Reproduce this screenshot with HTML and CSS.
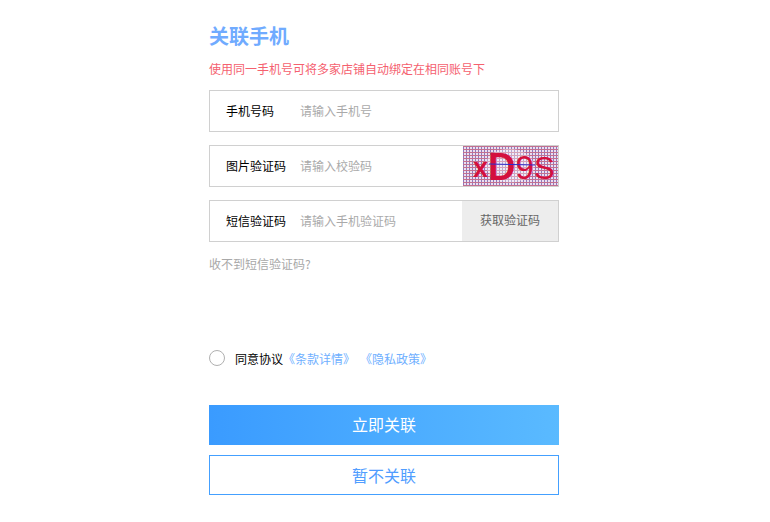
FILE: index.html
```html
<!DOCTYPE html>
<html>
    <head>
        <title>关联手机</title>
        <link rel="stylesheet" href="styles.css">
    </head>
    <body>
        <div class="bind">
            <h1 class="title">关联手机</h1>
            <p class="tip">使用同一手机号可将多家店铺自动绑定在相同账号下</p>
            <div class="field">
                <span class="label">手机号码</span>
                <span class="input">请输入手机号</span>
            </div>
            <div class="field">
                <span class="label">图片验证码</span>
                <span class="input">请输入校验码</span>
                <svg class="captcha" width="95" height="40" viewBox="0 0 95 40">
                    <defs>
                        <pattern id="dots" width="3" height="3" patternUnits="userSpaceOnUse">
                            <rect width="3" height="3" fill="#ecdfee"/>
                            <rect width="1" height="3" fill="#8f78bd"/>
                            <rect width="3" height="1" fill="#c4708f"/>
                        </pattern>
                    </defs>
                    <rect width="95" height="40" fill="url(#dots)"/>
                    <path d="M22 20 C24 -2 66 -4 72 20 C68 42 28 42 22 20 Z" fill="#fff" opacity=".35"/>
                    <text class="cap"><tspan class="cap-x" x="10" y="31">x</tspan><tspan class="cap-d" x="25" y="34">D</tspan><tspan class="cap-9" x="52.5" y="33">9</tspan><tspan class="cap-s" x="71" y="33">S</tspan></text>
                    <path d="M26 18 L72 19" stroke="#2a2fd0" stroke-width="1"/>
                </svg>
            </div>
            <div class="field">
                <span class="label">短信验证码</span>
                <span class="input">请输入手机验证码</span>
                <span class="send">获取验证码</span>
            </div>
            <div class="help">收不到短信验证码?</div>
            <div class="agree">
                <span class="radio"></span>
                <span class="agree-text">同意协议</span>
                <a class="link">《条款详情》</a>
                <a class="link link-2">《隐私政策》</a>
            </div>
            <div class="btn btn-main">立即关联</div>
            <div class="btn btn-skip">暂不关联</div>
        </div>
    </body>
</html>
```

FILE: styles.css
```css
* {
    box-sizing: border-box;
}
body {
    margin: 0;
    background-color: #fff;
    font-family: "Noto Sans CJK SC", "Liberation Sans", sans-serif;
    font-size: 12px;
}
.bind {
    width: 350px;
    margin: 0 0 0 209px;
    padding-top: 22px;
}
.title {
    margin: 0;
    height: 28px;
    line-height: 28px;
    font-size: 20px;
    font-weight: bold;
    color: #70abff;
}
.tip {
    margin: 9px 0 0;
    height: 20px;
    line-height: 20px;
    color: #f5616f;
}
.field {
    display: flex;
    align-items: center;
    height: 42px;
    margin-top: 13px;
    padding-bottom: 2px;
    border: 1px solid #d0d0d0;
}
.tip + .field {
    margin-top: 11px;
}
.label {
    width: 74px;
    margin-left: 16px;
    color: #000;
}
.input {
    flex: 1;
    color: #aaa;
}
.captcha {
    display: block;
    margin-bottom: -2px;
    overflow: visible;
}
.cap {
    font-family: "Liberation Sans", sans-serif;
    fill: #d4103e;
}
.cap-x {
    font-size: 27px;
    font-weight: bold;
}
.cap-d {
    font-size: 38px;
    font-weight: bold;
}
.cap-9 {
    font-size: 33px;
}
.cap-s {
    font-size: 31px;
}
.send {
    width: 96px;
    height: 40px;
    line-height: 38px;
    margin-bottom: -2px;
    text-align: center;
    background-color: #ededed;
    color: #666;
}
.help {
    height: 20px;
    line-height: 20px;
    margin-top: 12px;
    color: #a8a8a8;
}
.agree {
    display: flex;
    align-items: center;
    height: 20px;
    margin-top: 74px;
}
.radio {
    width: 16px;
    height: 16px;
    border: 1px solid #b0b0b0;
    border-radius: 50%;
    margin-right: 10px;
}
.agree-text {
    color: #000;
}
.link {
    color: #6fb0ff;
}
.link-2 {
    margin-left: 5px;
}
.btn {
    height: 40px;
    line-height: 39px;
    text-align: center;
    font-size: 16px;
}
.btn-main {
    margin-top: 37px;
    background: linear-gradient(90deg, #3a9bff, #5abaff);
    color: #fff;
}
.btn-skip {
    margin-top: 10px;
    border: 1px solid #44a0ff;
    line-height: 38px;
    color: #509dff;
}
```
